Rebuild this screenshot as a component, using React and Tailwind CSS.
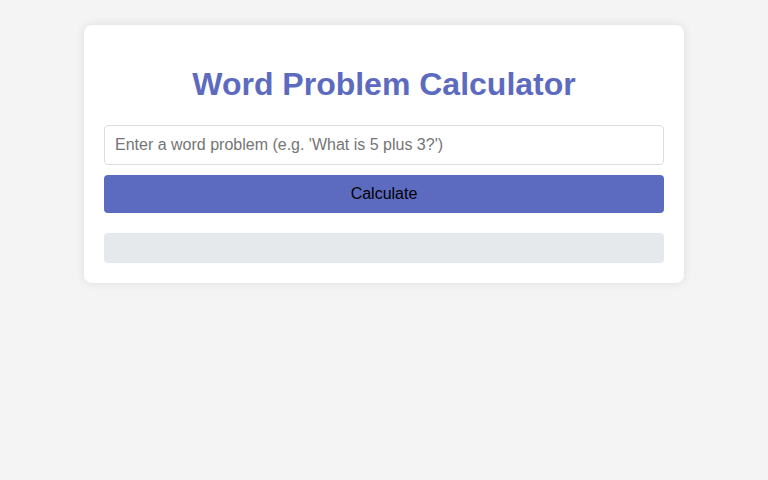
import React, { useState } from 'react';

const App = () => {
  const [problem, setProblem] = useState('');
  const [result, setResult] = useState('');

  return (
    <div className="min-h-screen bg-[#f4f4f4] pt-[25px] font-['Liberation_Sans',Arial,sans-serif]">
      {/* Card */}
      <div className="mx-auto w-[600px] rounded-lg bg-white p-5 shadow-[0_0_10px_rgba(0,0,0,0.1)]">
        <h1 className="my-[21.44px] text-center text-[32px] font-bold leading-[37px] text-[#5c6bc0]">
          Word Problem Calculator
        </h1>
        <input
          type="text"
          value={problem}
          onChange={(e) => setProblem(e.target.value)}
          placeholder="Enter a word problem (e.g. 'What is 5 plus 3?')"
          className="mb-[10px] block w-full rounded border border-[#ddd] px-[10px] py-[10px] text-base leading-[18px] text-black outline-none placeholder:text-[#757575]"
        />
        <button
          onClick={() => setResult(problem)}
          className="block w-full rounded bg-[#5c6bc0] py-[10px] text-base leading-[18px] text-black"
        >
          Calculate
        </button>
        <div className="mt-5 min-h-[30px] rounded bg-[#e6e9ec] p-[15px] text-base">
          {result}
        </div>
      </div>
    </div>
  );
};

export default App;
